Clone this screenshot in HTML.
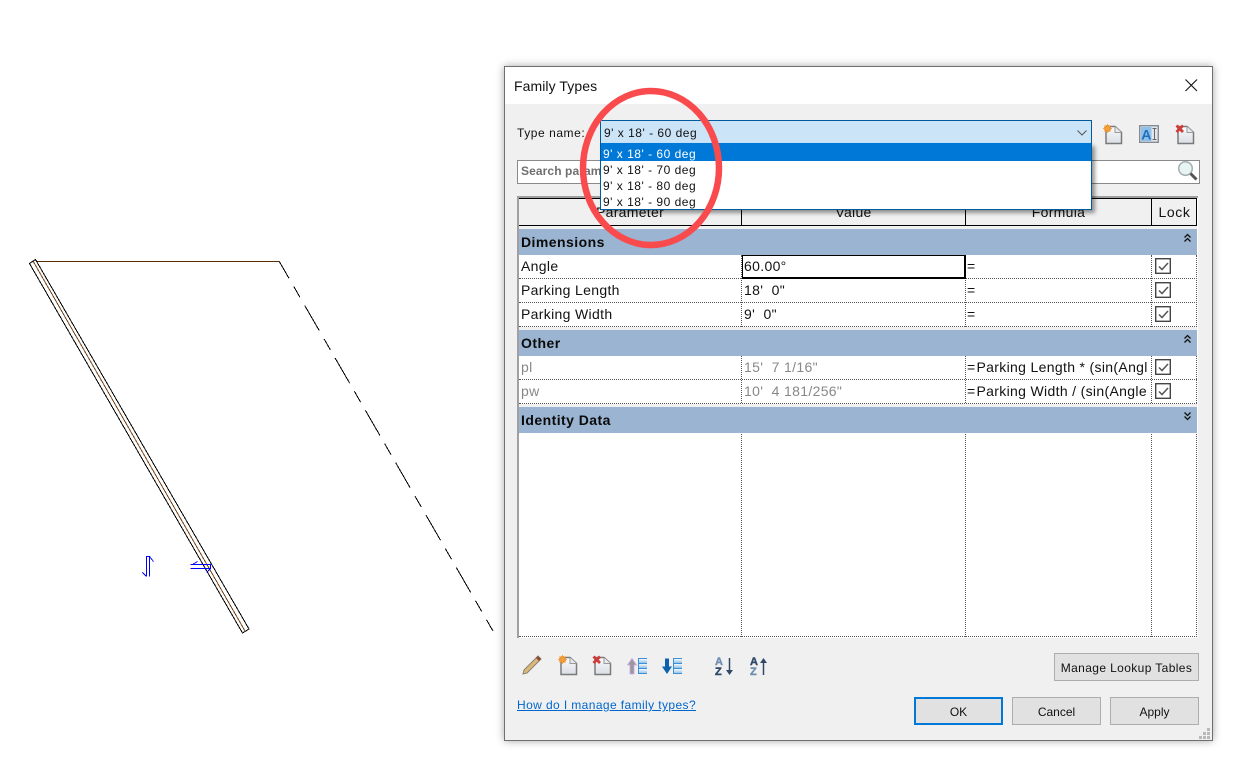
<!DOCTYPE html>
<html><head><meta charset="utf-8"><style>
html,body{margin:0;padding:0;width:1255px;height:763px;background:#fff;overflow:hidden}
body{position:relative;font-family:"Liberation Sans",sans-serif;color:#000}
.a{position:absolute;white-space:nowrap}
.dlg{left:504px;top:66px;width:707px;height:673px;border:1px solid #6e6e6e;background:#f0f0f0;box-shadow:0 0 8px rgba(0,0,0,.35)}
.tb{left:505px;top:67px;width:707px;height:37px;background:#fff}
.band{left:519px;width:678px;height:26px;background:#9ab4d1}
.bl{left:521px;font-size:14px;font-weight:bold;line-height:26px;color:#0a0a0a;letter-spacing:.45px}
.d{border-bottom:1px dotted #555}
.v{width:0;border-left:1px dotted #555}
.t{font-size:14px;line-height:24px;color:#111;letter-spacing:.33px}
.g{color:#888}
.h{font-size:14px;line-height:28px;text-align:center;color:#111;letter-spacing:.3px}
.btn{border:1px solid #adadad;background:#e1e1e1;font-size:12px;text-align:center;box-sizing:border-box;line-height:28px;color:#111}
.opt{left:603px;font-size:12px;line-height:16px;letter-spacing:.5px}
</style></head><body>

<svg class="a" style="left:0;top:0" width="504" height="763" shape-rendering="crispEdges">
<line x1="36" y1="261.500" x2="279" y2="261.500" stroke="#5a2e05" stroke-width="1"/>
<line x1="279" y1="261" x2="493" y2="631" stroke="#000" stroke-width="1" stroke-dasharray="29 9.5 12.5 9.5" stroke-dashoffset="9"/>
<path d="M29.500 263.500L35.500 259.500L249 629L242.500 633Z" fill="none" stroke="#000"/>
<line x1="33" y1="261" x2="245" y2="631" stroke="#7a4415"/>
<g stroke="#0000ff" fill="none">
<path d="M146.500 576.500V556.500H149.500V576.500M146.500 576.500L142.500 572.500M149.500 556.500L153.500 561.500"/>
<path d="M190.500 564.500H210.500V568.500H190.500M192.500 564.500L197.500 561.500M210.500 568.500L206.500 572.500"/>
</g>
</svg>

<div class="a dlg"></div>
<div class="a tb"></div>
<div class="a" style="left:514px;top:77px;font-size:14px;line-height:18px;color:#111;letter-spacing:.08px">Family Types</div>
<svg class="a" style="left:1184px;top:78px" width="15" height="15"><path d="M1.500 1.500L13 13M13 1.500L1.500 13" stroke="#111" stroke-width="1.100" fill="none"/></svg>

<div class="a" style="left:517px;top:125px;font-size:12px;line-height:16px;letter-spacing:.55px;color:#111">Type name:</div>

<!-- search -->
<div class="a" style="left:517px;top:160px;width:681px;height:22px;border:1px solid #8a8a8a;background:#fff"></div>
<div class="a" style="left:521px;top:163px;font-size:12px;font-weight:bold;line-height:16px;color:#6f6f6f;letter-spacing:.1px">Search parameters</div>
<svg class="a" style="left:1176px;top:159px" width="23" height="23">
<circle cx="9.500" cy="9.500" r="6.800" fill="#e8f3f3" stroke="#a3b0b0" stroke-width="1.500"/>
<path d="M14.500 14.500L20.500 20.500" stroke="#555" stroke-width="3"/>
</svg>

<!-- table -->
<div class="a" style="left:517px;top:196px;width:681px;height:442px;background:#fff;border-left:2px solid #a0a0a0;border-top:2px solid #a0a0a0;box-sizing:border-box"></div>
<div class="a" style="left:519px;top:198px;width:677px;height:26px;background:#f0f0f0;border-bottom:1px solid #000;border-right:1px solid #000;border-top:1px solid #000"></div>
<div class="a" style="left:519px;top:226px;width:678px;height:3px;background:#f0f0f0"></div>
<div class="a" style="left:741px;top:198px;width:1px;height:27px;background:#000"></div>
<div class="a" style="left:965px;top:198px;width:1px;height:27px;background:#000"></div>
<div class="a" style="left:1151px;top:198px;width:1px;height:27px;background:#000"></div>
<div class="a h" style="left:519px;top:198px;width:222px">Parameter</div>
<div class="a h" style="left:742px;top:198px;width:223px">Value</div>
<div class="a h" style="left:966px;top:198px;width:185px">Formula</div>
<div class="a h" style="left:1152px;top:198px;width:45px;letter-spacing:.6px">Lock</div>

<!-- grid lines -->
<div class="a v" style="left:741px;top:255px;height:382px"></div>
<div class="a v" style="left:965px;top:255px;height:382px"></div>
<div class="a v" style="left:1151px;top:255px;height:382px"></div>
<div class="a v" style="left:1196px;top:255px;height:382px"></div>
<div class="a d" style="left:519px;top:636px;width:678px"></div>
<div class="a d" style="left:519px;top:278px;width:678px"></div>
<div class="a d" style="left:519px;top:302px;width:678px"></div>
<div class="a d" style="left:519px;top:326px;width:678px"></div>
<div class="a d" style="left:519px;top:379px;width:678px"></div>
<div class="a d" style="left:519px;top:403px;width:678px"></div>
<div class="a" style="left:519px;top:327px;width:678px;height:3px;background:#f0f0f0"></div>
<div class="a" style="left:519px;top:404px;width:678px;height:3px;background:#f0f0f0"></div>

<div class="a band" style="top:229px"></div>
<div class="a band" style="top:330px"></div>
<div class="a band" style="top:407px"></div>
<div class="a bl" style="top:229px">Dimensions</div>
<div class="a bl" style="top:330px">Other</div>
<div class="a bl" style="top:407px">Identity Data</div>
<svg class="a" style="left:1183px;top:233px" width="9" height="10"><path d="M1.500 4.500L4.500 1.500L7.500 4.500M1.500 8.500L4.500 5.500L7.500 8.500" stroke="#111" stroke-width="1.300" fill="none"/></svg>
<svg class="a" style="left:1183px;top:334px" width="9" height="10"><path d="M1.500 4.500L4.500 1.500L7.500 4.500M1.500 8.500L4.500 5.500L7.500 8.500" stroke="#111" stroke-width="1.300" fill="none"/></svg>
<svg class="a" style="left:1183px;top:411px" width="9" height="10"><path d="M1.500 1.500L4.500 4.500L7.500 1.500M1.500 5.500L4.500 8.500L7.500 5.500" stroke="#111" stroke-width="1.300" fill="none"/></svg>

<div class="a t" style="left:521px;top:254px">Angle</div>
<div class="a t" style="left:521px;top:278px">Parking Length</div>
<div class="a t" style="left:521px;top:302px">Parking Width</div>
<div class="a t g" style="left:521px;top:355px">pl</div>
<div class="a t g" style="left:521px;top:379px">pw</div>

<div class="a" style="left:742px;top:255px;width:221px;height:21px;border:1px solid #000;border-bottom-width:2px;border-right-width:2px;background:#fff"></div>
<div class="a t" style="left:744px;top:254px">60.00°</div>
<div class="a t" style="left:744px;top:278px">18'&nbsp;&nbsp;0"</div>
<div class="a t" style="left:744px;top:302px">9'&nbsp;&nbsp;0"</div>
<div class="a t g" style="left:744px;top:355px">15'&nbsp;&nbsp;7 1/16"</div>
<div class="a t g" style="left:744px;top:379px">10'&nbsp;&nbsp;4 181/256"</div>

<div class="a t" style="left:967px;top:254px">=</div>
<div class="a t" style="left:967px;top:278px">=</div>
<div class="a t" style="left:967px;top:302px">=</div>
<div class="a t" style="left:967px;top:355px;width:180px;overflow:hidden">=<span style="margin-left:1px">Parking Length * (sin(Angl</span></div>
<div class="a t" style="left:967px;top:379px;width:183px;overflow:hidden">=<span style="margin-left:1px">Parking Width / (sin(Angle</span></div>

<svg width="0" height="0" style="position:absolute"><defs><path id="ck" d="M4 8.500L7 11.500L13 5" stroke="#555" stroke-width="1.500" fill="none"/><rect id="cb" x=".7" y=".7" width="14.600" height="14.600" fill="#fff" stroke="#444" stroke-width="1.400"/></defs></svg>
<svg class="a" style="left:1155px;top:258px" width="16" height="16"><use href="#cb"/><use href="#ck"/></svg>
<svg class="a" style="left:1155px;top:282px" width="16" height="16"><use href="#cb"/><use href="#ck"/></svg>
<svg class="a" style="left:1155px;top:306px" width="16" height="16"><use href="#cb"/><use href="#ck"/></svg>
<svg class="a" style="left:1155px;top:359px" width="16" height="16"><use href="#cb"/><use href="#ck"/></svg>
<svg class="a" style="left:1155px;top:383px" width="16" height="16"><use href="#cb"/><use href="#ck"/></svg>

<!-- combo -->
<div class="a" style="left:600px;top:120px;width:490px;height:22px;border:1px solid #005a9e;background:#cce4f7"></div>
<div class="a" style="left:604px;top:125px;font-size:12px;line-height:16px;letter-spacing:.5px;color:#111">9' x 18' - 60 deg</div>
<svg class="a" style="left:1077px;top:130px" width="10" height="6"><path d="M.5 .5L5 5L9.500 .5" stroke="#555" fill="none"/></svg>
<div class="a" style="left:600px;top:143px;width:490px;height:66px;border:1px solid #005a9e;border-top:0;background:#fff;box-shadow:3px 3px 4px rgba(0,0,0,.4)"></div>
<div class="a" style="left:601px;top:143px;width:490px;height:18px;background:#0078d7"></div>
<div class="a opt" style="top:146px;color:#fff">9' x 18' - 60 deg</div>
<div class="a opt" style="top:162px;color:#111">9' x 18' - 70 deg</div>
<div class="a opt" style="top:178px;color:#111">9' x 18' - 80 deg</div>
<div class="a opt" style="top:194px;color:#111">9' x 18' - 90 deg</div>

<!-- icons -->
<svg width="0" height="0" style="position:absolute"><defs>
<linearGradient id="dg" x1="0" y1="0" x2="0" y2="1"><stop offset="0" stop-color="#fafbfc"/><stop offset="1" stop-color="#d9dee5"/></linearGradient>
<linearGradient id="eg" x1="0" y1="0" x2="0" y2="1"><stop offset="0" stop-color="#f5fafe"/><stop offset="1" stop-color="#8fc0ea"/></linearGradient>
<g id="doc"><path d="M3 2.500H12L18.500 8.500V19.500H3Z" fill="url(#dg)" stroke="#7a7a7a" stroke-width="1.500"/><path d="M12 2.500V8.500H18.500" fill="#e6e9ed" stroke="#9a9a9a"/></g>
<g id="star"><circle cx="4.500" cy="4.500" r="3.500" fill="#f08a1c"/><circle cx="4.500" cy="4.500" r="1.500" fill="#ffd9a0"/><path d="M4.500 0V9M0 4.500H9M1.500 1.500L7.500 7.500M7.500 1.500L1.500 7.500" stroke="#f0a040" stroke-width=".9"/></g>
<g id="x"><path d="M1.500 1.500L8 8M8 1.500L1.500 8" stroke="#cf3b37" stroke-width="2.800" fill="none"/></g>
<g id="e"><rect x="0" y="0" width="9" height="16" fill="#fff"/><rect x="1" y="1" width="8" height="4" fill="url(#eg)"/><rect x="1" y="6" width="8" height="4" fill="url(#eg)"/><rect x="1" y="11" width="8" height="4.500" fill="url(#eg)"/><path d="M.5 0V16M0 .5H9M0 5.500H9M0 10.500H9M0 15.500H9" stroke="#3f8fd6"/></g>
</defs></svg>
<svg class="a" style="left:1103px;top:124px" width="21" height="21"><use href="#doc"/><use href="#star"/></svg>
<svg class="a" style="left:1139px;top:125px" width="20" height="18"><rect x=".7" y=".7" width="18.600" height="16.600" fill="#e3e7ec" stroke="#848c95" stroke-width="1.400"/><rect x="2" y="2" width="10.500" height="14" fill="#8fc0ea"/><text x="2.300" y="14.500" font-family="Liberation Sans" font-size="14" font-weight="bold" fill="#1f6fc0">A</text><path d="M15.500 4V14M13.500 3.500H17.500M13.500 14.500H17.500" stroke="#666"/></svg>
<svg class="a" style="left:1175px;top:124px" width="21" height="21"><use href="#doc"/><use href="#x"/></svg>

<svg class="a" style="left:521px;top:654px" width="22" height="22"><path d="M17 2L20 5L6 19L2 20L3 16Z" fill="#d9b878" stroke="#8a8374"/><path d="M16 3L19 6" stroke="#8a4d3c" stroke-width="3"/></svg>
<svg class="a" style="left:558px;top:655px" width="21" height="21"><use href="#doc"/><use href="#star"/></svg>
<svg class="a" style="left:592px;top:655px" width="21" height="21"><use href="#doc"/><use href="#x"/></svg>
<svg class="a" style="left:627px;top:658px" width="21" height="17"><path d="M5 .5L9.500 7H7V16H3V7H.5Z" fill="#999" stroke="#c9a6ee" stroke-width=".8"/><use href="#e" x="11"/></svg>
<svg class="a" style="left:662px;top:658px" width="21" height="17"><path d="M5 16L10 8.500H7V.5H3V8.500H0Z" fill="#0d62ad"/><use href="#e" x="11"/></svg>
<svg class="a" style="left:714px;top:655px" width="22" height="22"><text x="1" y="10" font-family="Liberation Sans" font-size="11" font-weight="bold" fill="#6f8fb3" stroke="#6f8fb3" stroke-width=".4">A</text><text x="1" y="20" font-family="Liberation Sans" font-size="11" font-weight="bold" fill="#2e4a68" stroke="#2e4a68" stroke-width=".4">Z</text><path d="M15.500 3V18" stroke="#2e4a68" stroke-width="1.500"/><path d="M12 15H19L15.500 20Z" fill="#2e4a68"/></svg>
<svg class="a" style="left:749px;top:655px" width="22" height="22"><text x="1" y="10" font-family="Liberation Sans" font-size="11" font-weight="bold" fill="#2e4a68" stroke="#2e4a68" stroke-width=".4">A</text><text x="1" y="20" font-family="Liberation Sans" font-size="11" font-weight="bold" fill="#6f8fb3" stroke="#6f8fb3" stroke-width=".4">Z</text><path d="M14.500 5V20" stroke="#2e4a68" stroke-width="1.500"/><path d="M11 8H18L14.500 3Z" fill="#2e4a68"/></svg>

<!-- link -->
<div class="a" style="left:517px;top:697px;font-size:12px;line-height:16px;letter-spacing:.4px;color:#0066cc;text-decoration:underline">How do I manage family types?</div>

<!-- buttons -->
<div class="a btn" style="left:1054px;top:653px;width:145px;height:28px;letter-spacing:.38px">Manage Lookup Tables</div>
<div class="a btn" style="left:914px;top:697px;width:89px;height:28px;border:2px solid #0078d7;line-height:26px">OK</div>
<div class="a btn" style="left:1012px;top:697px;width:89px;height:28px">Cancel</div>
<div class="a btn" style="left:1110px;top:697px;width:89px;height:28px">Apply</div>

<svg class="a" style="left:1199px;top:727px" width="13" height="13" shape-rendering="crispEdges"><g fill="#b9b9b9"><rect x="8" y="1" width="3" height="3"/><rect x="4" y="5" width="3" height="3"/><rect x="8" y="5" width="3" height="3"/><rect x="0" y="9" width="3" height="3"/><rect x="4" y="9" width="3" height="3"/><rect x="8" y="9" width="3" height="3"/></g></svg>

<!-- red ellipse -->
<svg class="a" style="left:570px;top:80px" width="165" height="175"><ellipse cx="81" cy="88" rx="68" ry="77" fill="none" stroke="#f94b4e" stroke-width="6.500"/></svg>
</body></html>
